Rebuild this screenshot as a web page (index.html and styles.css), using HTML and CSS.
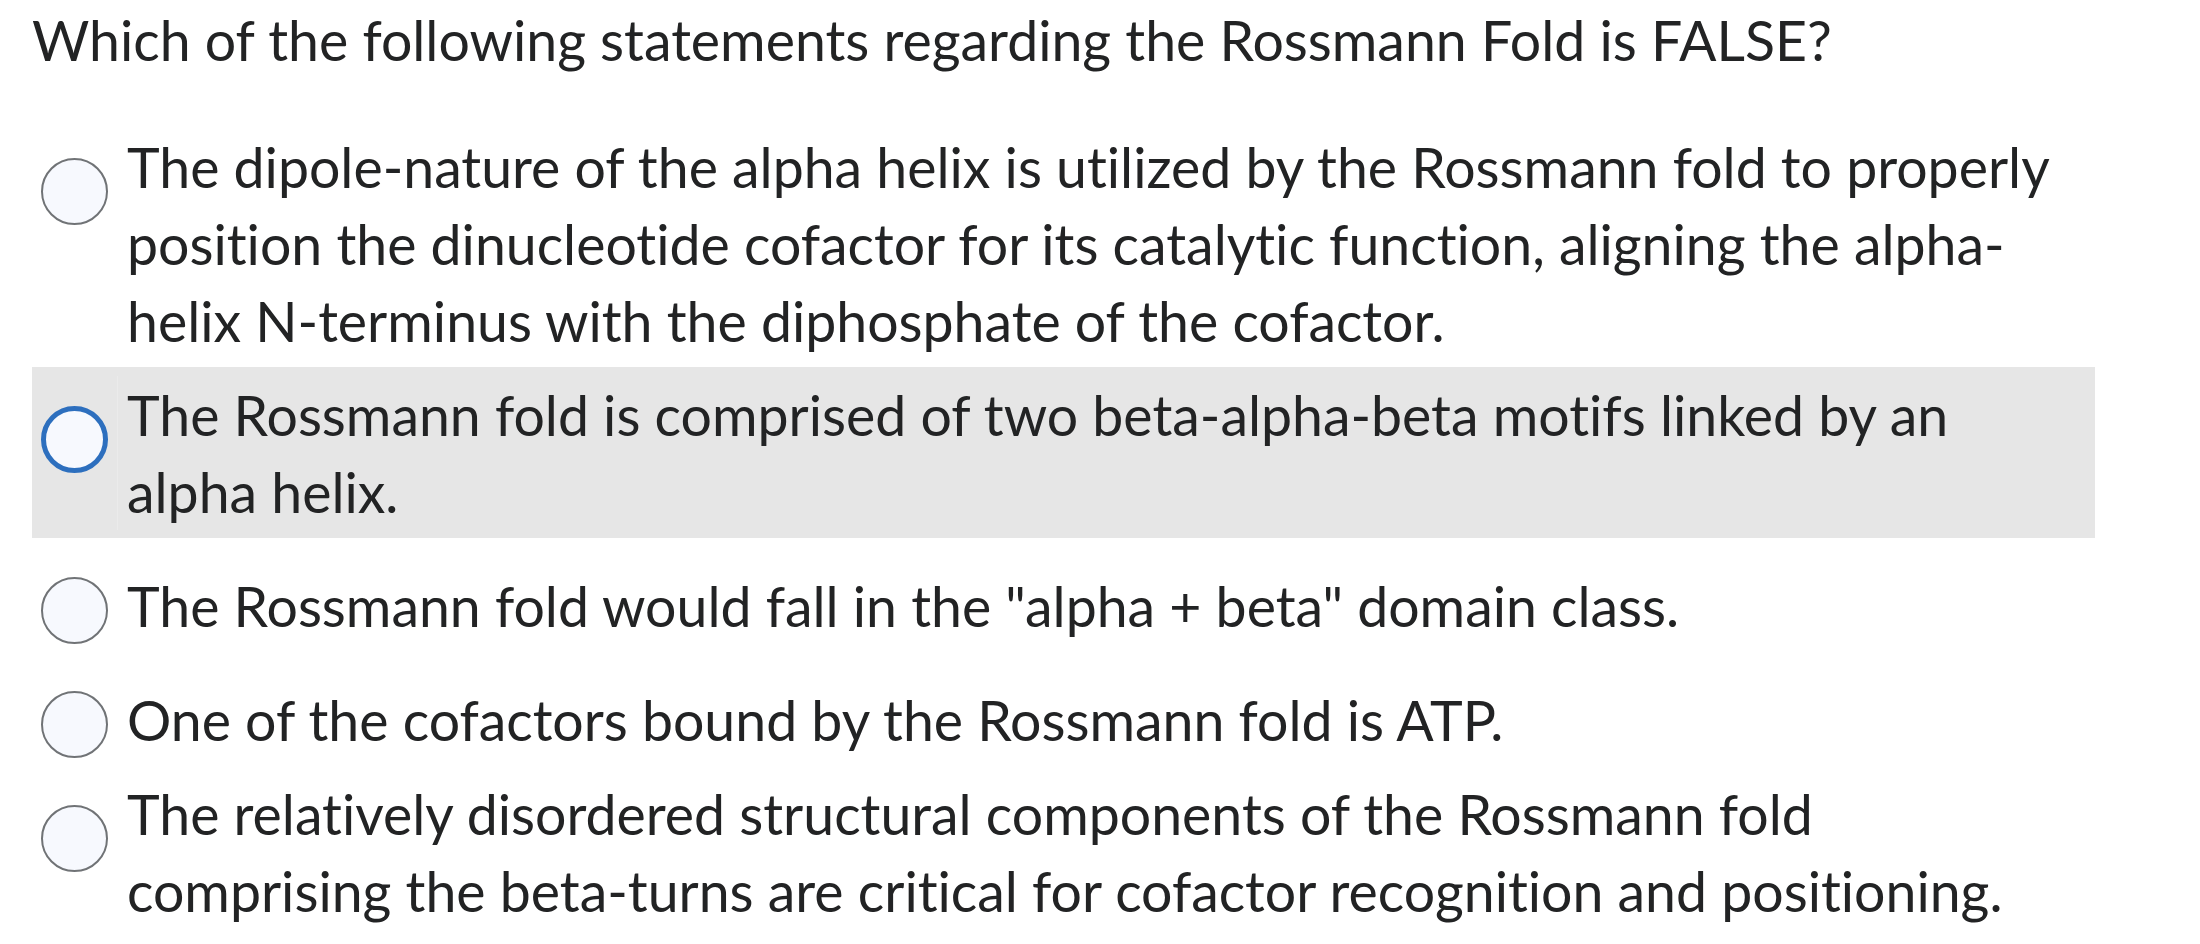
FILE: index.html
```html
<!DOCTYPE html>
<html lang="en">
<head>
<meta charset="utf-8">
<title>Quiz question</title>
<link rel="stylesheet" href="styles.css">
</head>
<body>
<main class="quiz">
  <h1 class="question">Which of the following statements regarding the Rossmann Fold is FALSE?</h1>
  <div class="answers" role="radiogroup">
    <label class="answer">
      <span class="answer__control"><span class="radio"></span></span>
      <span class="answer__text">The dipole-nature of the alpha helix is utilized by the Rossmann fold to properly position the dinucleotide cofactor for its catalytic function, aligning the alpha-helix N-terminus with the diphosphate of the cofactor.</span>
    </label>
    <label class="answer answer--focused">
      <span class="answer__control"><span class="radio"></span></span>
      <span class="answer__text">The Rossmann fold is comprised of two beta-alpha-beta motifs linked by an alpha helix.</span>
    </label>
    <label class="answer">
      <span class="answer__control"><span class="radio"></span></span>
      <span class="answer__text">The Rossmann fold would fall in the "alpha + beta" domain class.</span>
    </label>
    <label class="answer">
      <span class="answer__control"><span class="radio"></span></span>
      <span class="answer__text">One of the cofactors bound by the Rossmann fold is ATP.</span>
    </label>
    <label class="answer">
      <span class="answer__control"><span class="radio"></span></span>
      <span class="answer__text">The relatively disordered structural components of the Rossmann fold comprising the beta-turns are critical for cofactor recognition and positioning.</span>
    </label>
  </div>
</main>
</body>
</html>
```
FILE: styles.css
```css
html, body {
  margin: 0;
  padding: 0;
  background: #ffffff;
}

body {
  font-family: Lato, "Liberation Sans", sans-serif;
  font-variant-ligatures: none;
  font-feature-settings: "liga" 0, "clig" 0;
  color: #222324;
}

.quiz {
  width: 2063px;
  margin-left: 32px;
  padding-top: 1px;
}

.question {
  margin: 0;
  font-size: 55.4px;
  font-weight: 400;
  line-height: 77px;
}

.answers {
  margin-top: 41px;
  display: flex;
  flex-direction: column;
}

.answer {
  display: flex;
  padding: 8.5px 20px 8.5px 0;
  cursor: pointer;
}

.answer--focused {
  background: #e6e6e6;
}

.answer__control {
  flex: none;
  align-self: flex-start;
  width: 85px;
  box-sizing: border-box;
  padding: 30px 0 0 9px;
}

.radio {
  display: block;
  width: 67px;
  height: 67px;
  box-sizing: border-box;
  border-radius: 50%;
  border: 2px solid #707376;
  background: #f7f9fe;
}

.answer--focused .radio {
  border: 5px solid #2d6fbe;
}

.answer__text {
  align-self: flex-end;
  flex: 1;
  font-size: 55.4px;
  line-height: 77px;
  padding-left: 9px;
  border-left: 1px solid transparent;
}

.answer--focused .answer__text {
  border-left-color: #ebebeb;
}
```
